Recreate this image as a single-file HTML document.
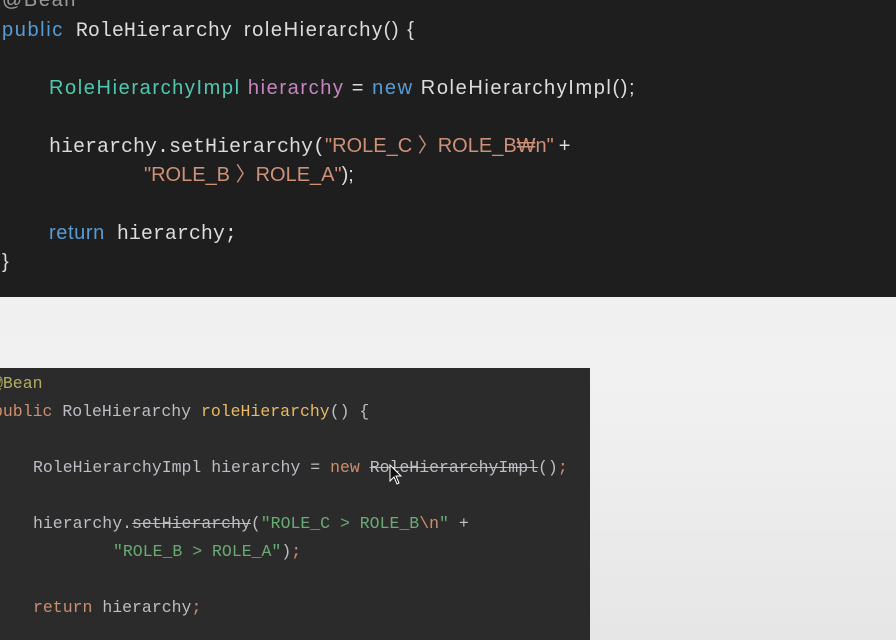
<!DOCTYPE html>
<html><head><meta charset="utf-8"><style>
body{margin:0;width:896px;height:640px;overflow:hidden;background:linear-gradient(180deg,#eeeeee 0%,#f1f1f1 60%,#e6e6e6 100%);position:relative}
#top{position:absolute;left:0;top:0;width:896px;height:297px;background:#1e1e1e}
#bot{position:absolute;left:0;top:368px;width:590px;height:272px;background:#2b2b2b}
.l{position:absolute;white-space:pre;line-height:1}
.t{font-size:20px;color:#dcdcdc}
.s{font-family:"Liberation Sans",sans-serif;letter-spacing:1.6px}
.st2{letter-spacing:0}
.m{font-family:"Liberation Mono",monospace;letter-spacing:0}
.b{font-family:"Liberation Mono",monospace;font-size:16.5px;color:#bcbec4}
.kw{color:#569cd6}.ty{color:#4ec9b0}.va{color:#c586c0}.st{color:#ce9178}
.ok{color:#cf8e6d}.ann{color:#b3ae60}.fn{color:#e8ba62}.gs{color:#6aab73}.del{text-decoration:line-through}
</style></head><body>
<div id="top">
<div class="l t s" style="left:2px;top:-10px;color:#9a9a9a">@Bean</div>
<div class="l t" style="left:2px;top:20px"><span class="s kw">public</span><span class="m"> RoleHierarchy </span><span class="s">roleHierarchy() {</span></div>
<div class="l t s" style="left:49px;top:78px"><span class="ty">RoleHierarchyImpl</span> <span class="va">hierarchy</span> = <span class="kw">new</span> RoleHierarchyImpl();</div>
<div class="l t" style="left:49px;top:136px"><span class="m">hierarchy.setHierarchy(</span><span class="s st st2">"ROLE_C 〉ROLE_B₩n"</span> <span class="s">+</span></div>
<div class="l t s st st2" style="left:144px;top:165px">"ROLE_B 〉ROLE_A"<span style="color:#dcdcdc">);</span></div>
<div class="l t" style="left:49px;top:223px"><span class="s kw" style="letter-spacing:0.6px">return</span><span class="m"> hierarchy;</span></div>
<div class="l t s" style="left:2px;top:252px">}</div>
</div>
<div id="bot">
<div class="l b ann" style="left:-7px;top:8px">@Bean</div>
<div class="l b" style="left:-7px;top:36px"><span class="ok">public</span> RoleHierarchy <span class="fn">roleHierarchy</span>() {</div>
<div class="l b" style="left:33px;top:92px">RoleHierarchyImpl hierarchy = <span class="ok">new</span> <span class="del">RoleHierarchyImpl</span>()<span class="ok">;</span></div>
<div class="l b" style="left:33px;top:148px">hierarchy.<span class="del">setHierarchy</span>(<span class="gs">"ROLE_C &gt; ROLE_B</span><span class="ok">\n</span><span class="gs">"</span> +</div>
<div class="l b gs" style="left:113px;top:176px">"ROLE_B &gt; ROLE_A"<span style="color:#bcbec4">)</span><span class="ok">;</span></div>
<div class="l b" style="left:33px;top:232px"><span class="ok">return</span> hierarchy<span class="ok">;</span></div>
</div>
<svg style="position:absolute;left:389px;top:464px" width="14" height="22" viewBox="0 0 14 22"><path d="M1 1 L1 17 L5 13 L8 20 L10 19 L7 12 L12 12 Z" fill="#111" stroke="#fff" stroke-width="1"/></svg>
</body></html>
